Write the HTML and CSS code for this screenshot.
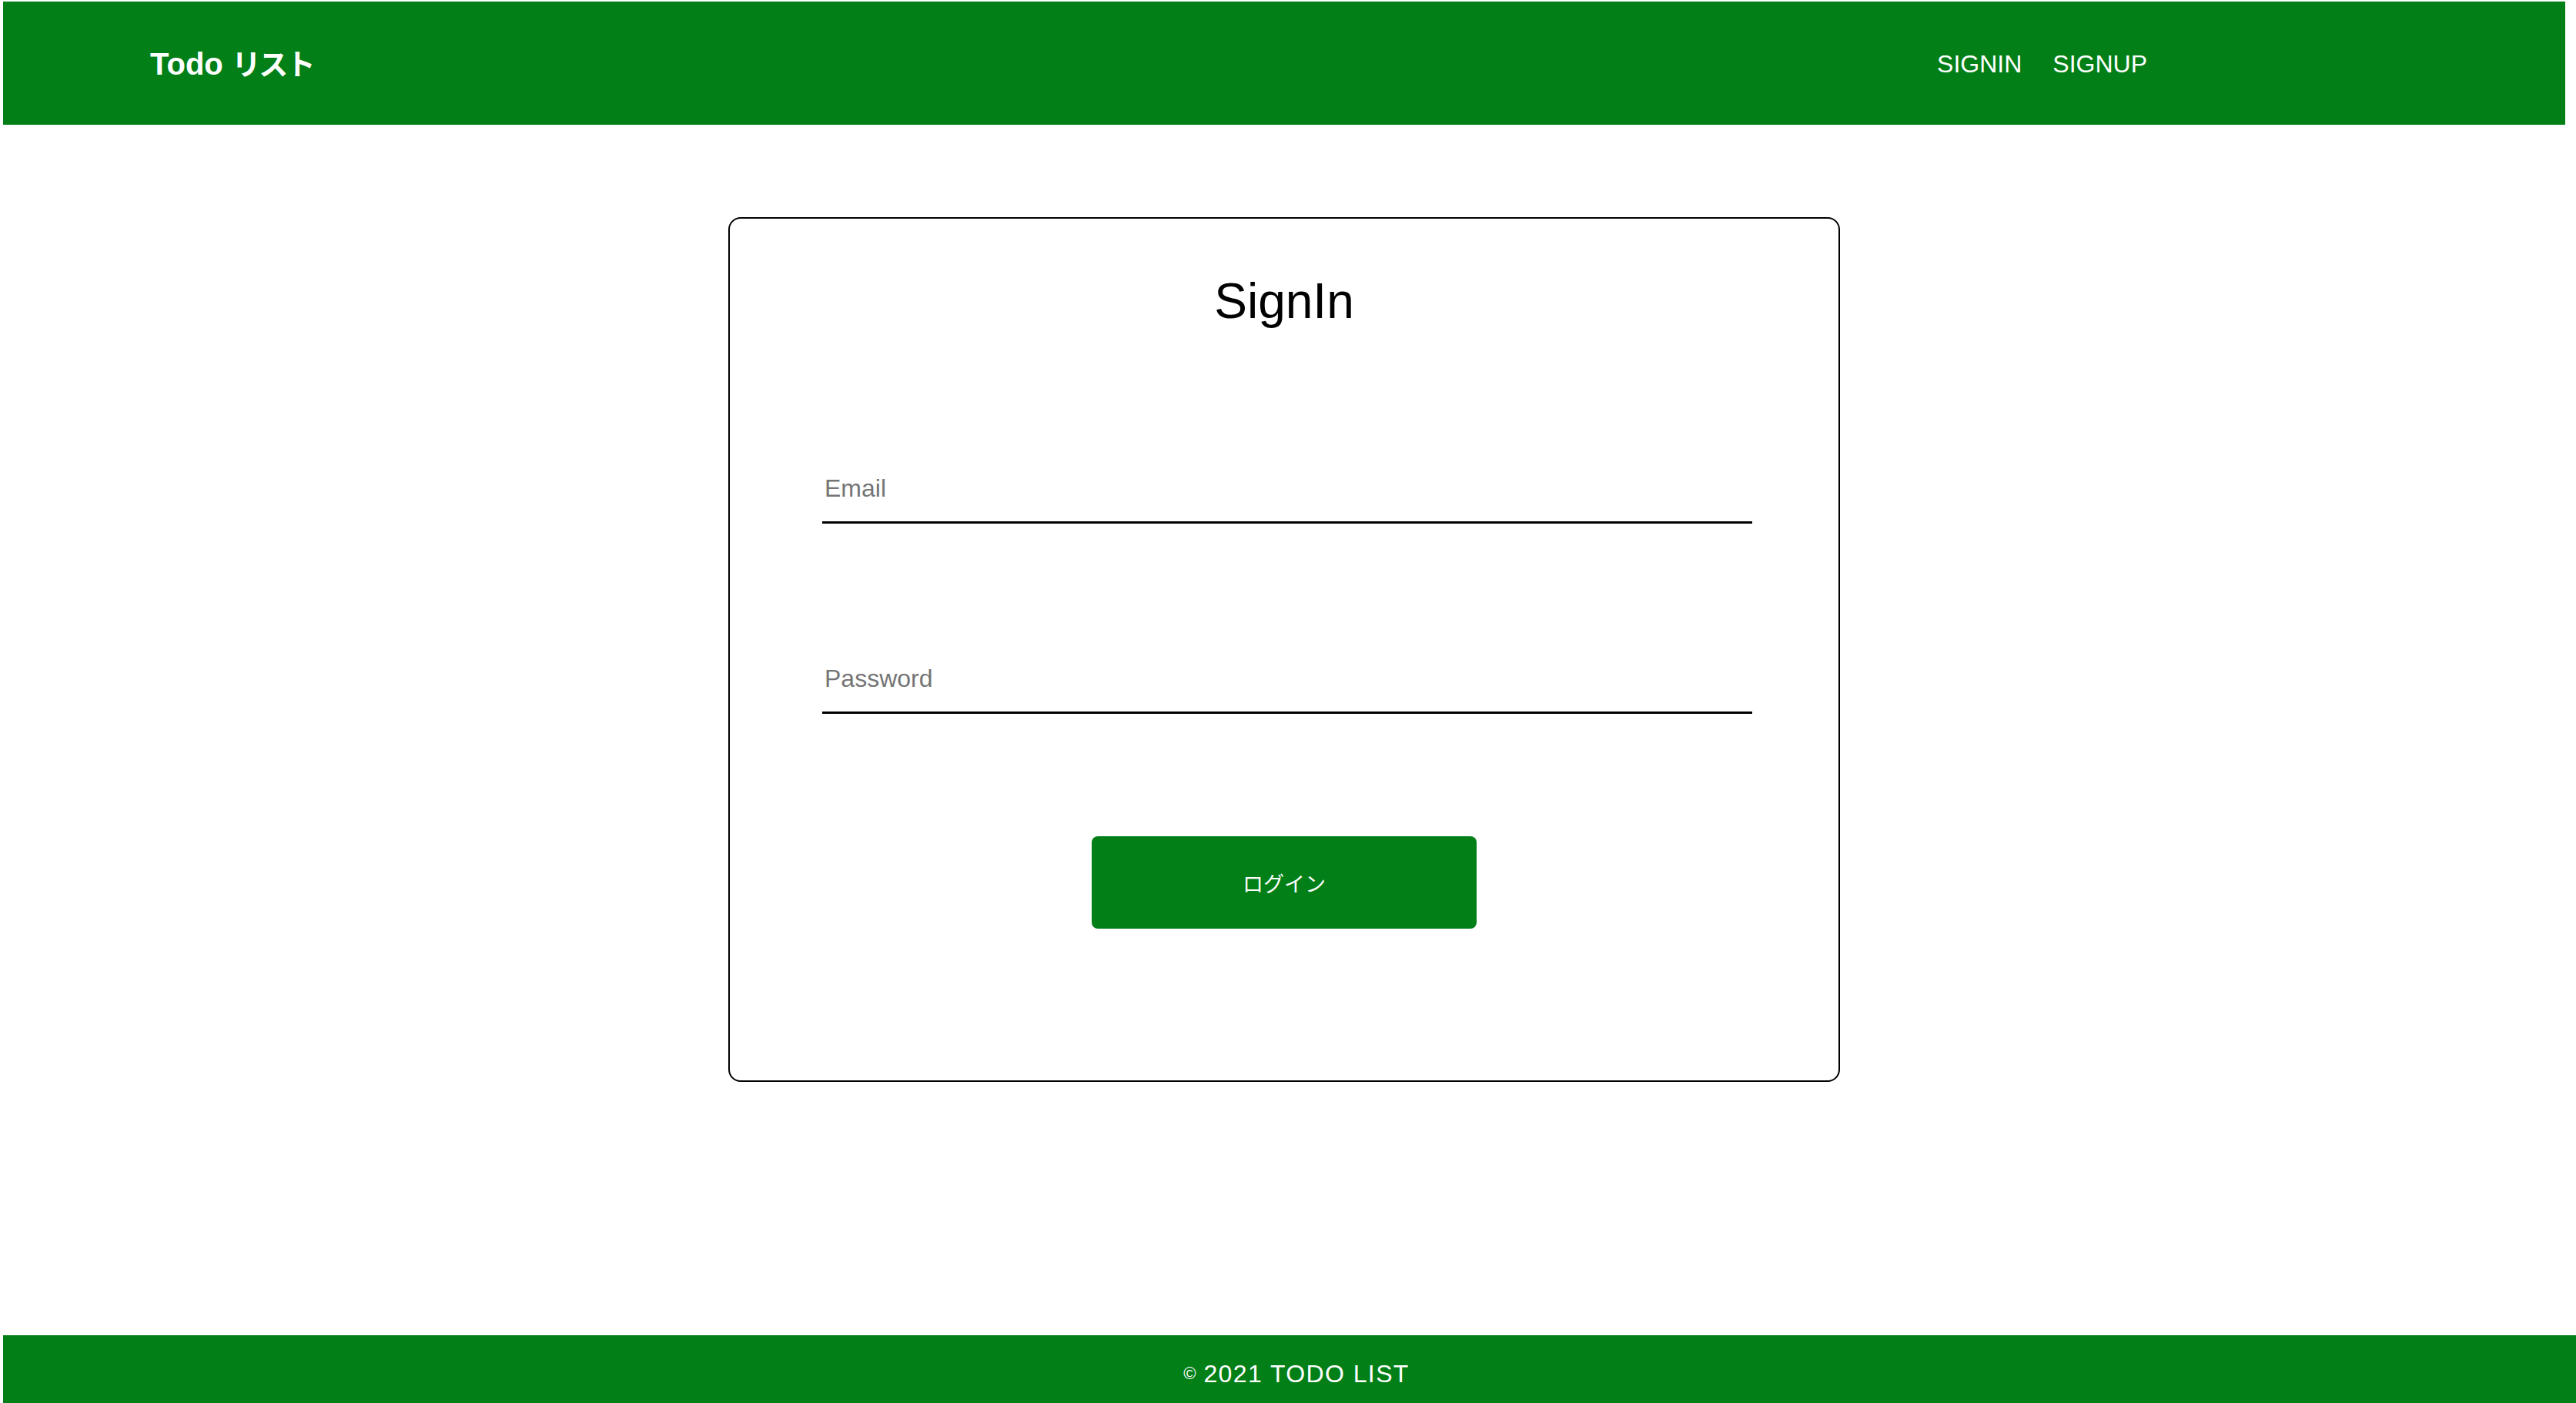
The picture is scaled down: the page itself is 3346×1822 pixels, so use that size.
FILE: index.html
```html
<!DOCTYPE html>
<html lang="ja">
<head>
<meta charset="utf-8">
<title>Todo リスト - SignIn</title>
<link rel="stylesheet" href="styles.css">
</head>
<body class="page">
  <header class="app-bar">
    <div class="brand">Todo <span class="brand-ja">リスト</span></div>
    <nav class="nav">
      <a class="nav-link" href="#">SIGNIN</a>
      <a class="nav-link" href="#">SIGNUP</a>
    </nav>
  </header>
  <main class="main">
    <section class="card">
      <h1 class="card-title">SignIn</h1>
      <form class="form">
        <div class="field">
          <input class="field-input" type="email" placeholder="Email">
        </div>
        <div class="field field-password">
          <input class="field-input" type="password" placeholder="Password">
        </div>
        <button class="btn" type="button">ログイン</button>
      </form>
    </section>
  </main>
  <footer class="footer">
    <span class="copy-mark">©</span><span class="copy-text">2021 TODO LIST</span>
  </footer>
</body>
</html>
```
FILE: styles.css
```css
html, body {
  margin: 0;
  padding: 0;
  overflow: hidden;
  background: #ffffff;
}

.page {
  font-family: "Liberation Sans", Arial, "Noto Sans CJK JP", sans-serif;
  color: #000;
}

.app-bar {
  margin: 2px 14px 0 4px;
  height: 160px;
  background: #027f17;
  color: #fff;
  display: flex;
  align-items: center;
  justify-content: space-between;
  padding: 0 543px 0 191px;
  box-sizing: border-box;
}

.brand {
  font-family: "Liberation Sans", Arial, "Noto Sans CJK JP", sans-serif;
  font-weight: 700;
  font-size: 40px;
  line-height: 40px;
}

.brand-ja {
  font-family: "Noto Sans CJK JP", sans-serif;
  font-size: 38px;
  letter-spacing: -2.6px;
}

.nav {
  display: flex;
  gap: 40px;
  padding-top: 2px;
}

.nav-link {
  color: #fff;
  text-decoration: none;
  font-size: 32px;
  line-height: 32px;
}

.main {
  margin: 0 14px 0 4px;
  padding-top: 120px;
}

.card {
  width: 1444px;
  height: 1123px;
  margin: 0 auto;
  box-sizing: border-box;
  border: 2px solid #000;
  border-radius: 16px;
  padding-top: 70px;
}

.card-title {
  margin: 0;
  text-align: center;
  font-weight: 400;
  font-size: 64px;
  line-height: 74px;
}

.form {
  display: flex;
  flex-direction: column;
  padding: 188px 112px 0 120px;
}

.field {
  height: 64px;
  box-sizing: border-box;
  border-bottom: 3px solid #000;
}

.field-password {
  margin-top: 183px;
}

.field-input {
  display: block;
  width: 100%;
  box-sizing: border-box;
  border: none;
  outline: none;
  background: transparent;
  margin: 0;
  padding: 0 0 0 3px;
  height: 36px;
  font-family: "Liberation Sans", Arial, sans-serif;
  font-size: 32px;
  line-height: 36px;
  color: #000;
}

.field-input::placeholder {
  color: #757575;
  opacity: 1;
}

.btn {
  align-self: center;
  margin: 159px 0 0 -8px;
  width: 500px;
  height: 120px;
  border: none;
  border-radius: 8px;
  background: #027f17;
  color: #fff;
  font-family: "Noto Sans CJK JP", sans-serif;
  font-size: 27px;
  cursor: pointer;
}

.footer {
  margin: 329px 0 0 4px;
  height: 100px;
  background: #027f17;
  color: #fff;
  display: flex;
  align-items: center;
  justify-content: center;
  padding-left: 18px;
}

.copy-mark {
  font-size: 22px;
  line-height: 32px;
  margin-right: 10px;
}

.copy-text {
  font-size: 32px;
  line-height: 32px;
  letter-spacing: 1.4px;
}
```
